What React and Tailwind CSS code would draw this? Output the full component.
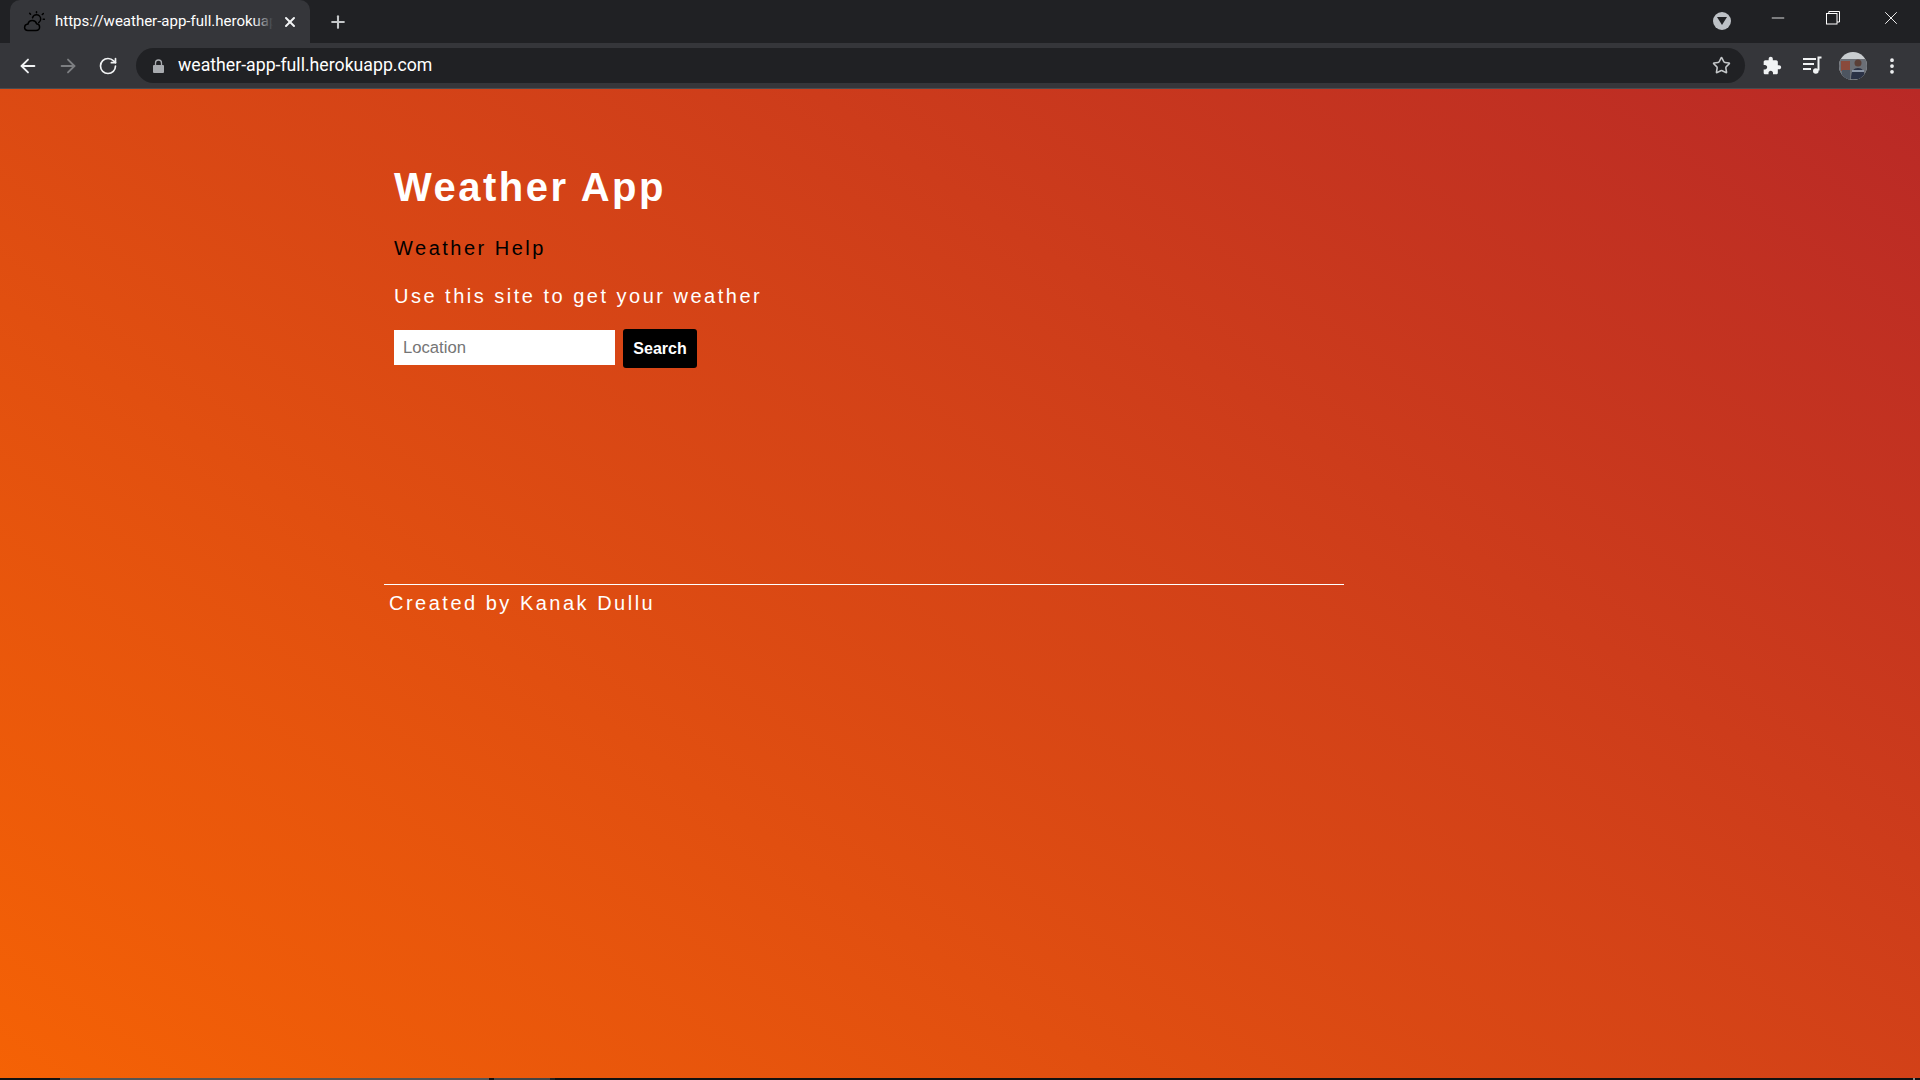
import React from 'react';
import { ArrowLeft, ArrowRight, RotateCw, Star, Plus, X, Minus, EllipsisVertical } from 'lucide-react';

const Favicon = () => (
  <svg width="22" height="22" viewBox="0 0 22 22" fill="none" stroke="#000" strokeWidth="1.5" strokeLinecap="round">
    <path d="M5 19.5h8c2.2 0 3.6-1.5 3.6-3.4 0-1.8-1.3-3.2-3-3.4-.6-2-2.2-3.2-4.2-3.2-2.3 0-4 1.5-4.4 3.5C3.2 13.2 1.6 14.5 1.6 16.300c0 1.800 1.500 3.200 3.400 3.200z" />
    <path d="M9.500 6.800c.6-1.800 2.100-3 3.900-3 2.400 0 4.300 1.900 4.300 4.300 0 1.500-.8 2.800-2 3.600" />
    <path d="M13.500.8v1M20.300 2.600l-1 .9M21.400 8.200h-1.200M6.700 2.300l.8.9" />
  </svg>
);

const Puzzle = () => (
  <svg width="20" height="20" viewBox="0 0 24 24" fill="#f1f3f4">
    <path d="M20.500 11H19V7c0-1.100-.9-2-2-2h-4V3.500C13 2.120 11.880 1 10.500 1S8 2.120 8 3.500V5H4c-1.100 0-1.990.9-1.990 2v3.800H3.500c1.490 0 2.700 1.210 2.700 2.700s-1.210 2.700-2.700 2.700H2V20c0 1.100.9 2 2 2h3.800v-1.500c0-1.490 1.210-2.700 2.700-2.700s2.700 1.210 2.700 2.700V22H17c1.100 0 2-.9 2-2v-4h1.500c1.380 0 2.500-1.120 2.500-2.500S21.880 11 20.500 11z" />
  </svg>
);

const MediaIcon = () => (
  <svg width="22" height="20" viewBox="0 0 22 20" fill="none" stroke="#f1f3f4" strokeWidth="2">
    <path d="M1 3h13M1 8h11M1 13h8" />
    <path d="M19.500 1.500h-3v13" />
    <circle cx="13.800" cy="15" r="2.800" fill="#f1f3f4" stroke="none" />
  </svg>
);

const Avatar = () => (
  <svg width="28" height="28" viewBox="0 0 28 28">
    <clipPath id="avatar-clip"><circle cx="14" cy="14" r="14" /></clipPath>
    <g clipPath="url(#avatar-clip)">
      <rect width="28" height="28" fill="#c9cdd0" />
      <rect y="7" width="28" height="21" fill="#6b6f76" />
      <rect x="2" y="9" width="9" height="10" fill="#8a4a3c" />
      <rect x="3" y="18" width="8" height="10" fill="#4d5560" />
      <circle cx="19" cy="11" r="3.500" fill="#5a4038" />
      <path d="M12 27c0-8 3-11 7-11s7 3 7 11z" fill="#2b3246" />
      <rect x="13" y="18" width="12" height="2" fill="#8d97a8" />
    </g>
  </svg>
);

const RestoreIcon = () => (
  <svg width="14" height="14" viewBox="0 0 14 14" fill="none" stroke="#fff" strokeWidth="1">
    <rect x="0.500" y="2.500" width="10.500" height="10.500" />
    <path d="M2.800 2.500V.5h10.700v10.500h-2.500" />
  </svg>
);

const ChromeBar = () => (
  <div className="shrink-0 bg-[#202124] font-['Roboto',sans-serif]">
    <div className="h-[43px] flex items-end">
      <div className="relative ml-[10px] w-[300px] h-[43px] pl-[13px] flex items-center bg-[#35363a] rounded-t-[10px] overflow-hidden">
        <Favicon />
        <div className="relative ml-[10px] w-[218px] overflow-hidden">
          <span className="block whitespace-nowrap text-[15px] text-white">https://weather-app-full.herokuapp.com</span>
          <div className="absolute inset-y-0 right-0 w-[20px] bg-gradient-to-r from-transparent to-[#35363a]" />
        </div>
        <X size={16} strokeWidth={3} color="#f1f3f4" className="ml-[9px] shrink-0" />
      </div>
      <div className="ml-[18px] h-[43px] flex items-center">
        <Plus size={20} strokeWidth={2.500} color="#c4c7c9" />
      </div>
      <div className="flex-1" />
      <div className="h-[43px] pt-[12px] mr-[37px] flex">
        <div className="w-[18px] h-[18px] flex items-center justify-center rounded-full bg-[#bdc1c6]">
          <svg width="10" height="8" viewBox="0 0 10 8"><path d="M0 0h10L5 8z" fill="#202124" /></svg>
        </div>
      </div>
      <div className="h-[43px] pb-[8px] flex items-center">
        <Minus size={20} strokeWidth={1} color="#fff" className="mr-[38px]" />
        <RestoreIcon />
        <X size={22} strokeWidth={1} color="#fff" className="ml-[40px] mr-[18px]" />
      </div>
    </div>
    <div className="h-[46px] pl-[17px] pr-[18px] flex items-center bg-[#35363a] border-b border-[#4a4c50]">
      <ArrowLeft size={22} strokeWidth={2} color="#f1f3f4" />
      <ArrowRight size={22} strokeWidth={2} color="#7d7f82" className="ml-[18px]" />
      <RotateCw size={20} strokeWidth={2} color="#f1f3f4" className="ml-[19px]" />
      <div className="ml-[18px] h-[35px] flex-1 flex items-center bg-[#202124] rounded-full pl-[17px] pr-[14px]">
        <svg width="11" height="14" viewBox="0 0 11 14" fill="#a8abaf">
          <path d="M1 6h9a1 1 0 0 1 1 1v6a1 1 0 0 1-1 1H1a1 1 0 0 1-1-1V7a1 1 0 0 1 1-1z" />
          <path d="M2.500 6V4a3 3 0 0 1 6 0v2" fill="none" stroke="#a8abaf" strokeWidth="1.300" />
        </svg>
        <span className="ml-[14px] flex-1 text-[17.700px] text-white">weather-app-full.herokuapp.com</span>
        <Star size={19} strokeWidth={2} color="#c4c7c9" />
      </div>
      <div className="ml-[17px] flex items-center">
        <Puzzle />
        <div className="ml-[20px]"><MediaIcon /></div>
        <div className="ml-[15px]"><Avatar /></div>
        <EllipsisVertical size={20} strokeWidth={2.500} color="#f1f3f4" className="ml-[15px]" />
      </div>
    </div>
  </div>
);

export default function App() {
  return (
    <div className="h-screen flex flex-col overflow-hidden font-['Liberation_Sans',sans-serif]">
      <ChromeBar />
      <main className="flex-1 bg-[linear-gradient(35deg,#f56205,#b92926)]">
        <div className="ml-[384px] w-[960px]">
          <div className="pt-[75px] pl-[10px] h-[495px]">
            <h1 className="text-[40px] leading-[46px] font-bold tracking-[2.500px] text-white">Weather App</h1>
            <p className="mt-[27px] text-[20px] leading-[23px] tracking-[2.500px] text-black">Weather Help</p>
            <p className="mt-[25px] text-[20px] leading-[23px] tracking-[2.500px] text-white">Use this site to get your weather</p>
            <form className="mt-[22px] flex items-start">
              <input
                placeholder="Location"
                className="w-[221px] h-[35px] px-[9px] bg-white text-[16.670px] outline-none placeholder:text-[#757575]"
              />
              <button type="button" className="ml-[8px] -mt-px w-[74px] h-[39px] bg-black rounded-[3px] text-white text-[16px] font-bold">
                Search
              </button>
            </form>
          </div>
          <footer className="border-t border-white pl-[5px] pt-[7px] text-[20px] leading-[23px] tracking-[2.500px] text-white">
            Created by Kanak Dullu
          </footer>
        </div>
      </main>
      <div className="shrink-0 h-[2px] flex bg-[#111]">
        <div className="ml-[60px] w-[429px] bg-[#555]" />
        <div className="ml-[5px] w-[56px] bg-[#444]" />
        <div className="w-[5px] bg-[#222]" />
        <div className="ml-auto mr-[5px] w-[2px] bg-[#888]" />
      </div>
    </div>
  );
}
